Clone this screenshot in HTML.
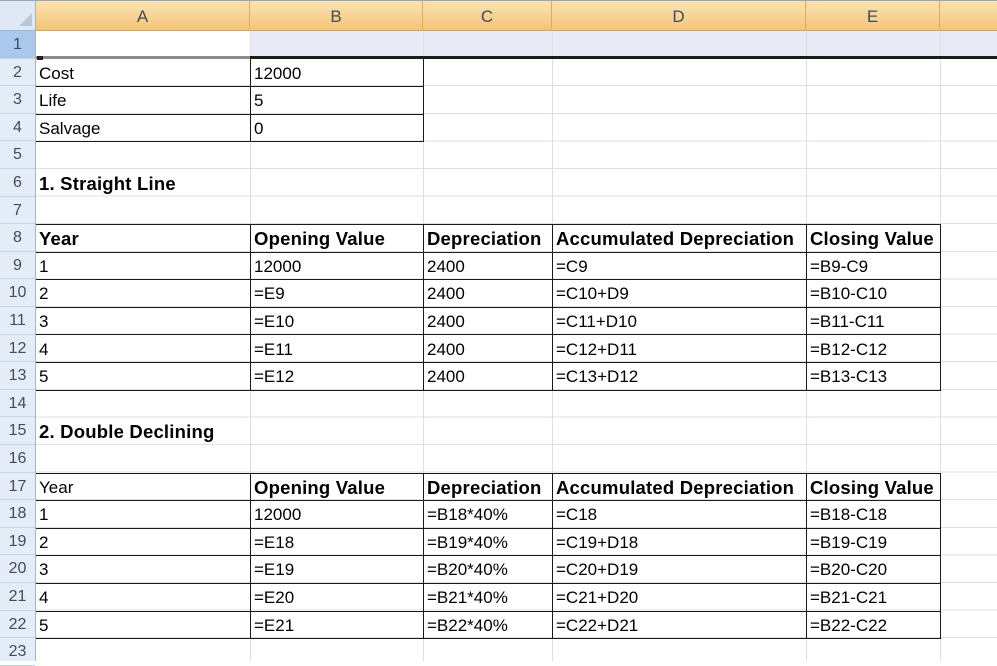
<!DOCTYPE html>
<html><head><meta charset="utf-8">
<style>
*{margin:0;padding:0;box-sizing:border-box}
body{width:997px;height:661px;overflow:hidden;background:#fff;position:relative;font-family:"Liberation Sans",Arial,sans-serif;font-size:17px;color:#000}
.a{position:absolute}
.grid{position:absolute;left:36px;top:31px;right:0;bottom:0;background:repeating-linear-gradient(to bottom,transparent 0,transparent 26.6px,#dadfe8 26.6px,#dadfe8 27.6px)}
.vl{position:absolute;top:31px;bottom:0;width:1px;background:#dadfe8}
.colh{position:absolute;top:0;height:31px;left:36px;right:0;background:linear-gradient(#fbe3b4,#f3c677);border-bottom:1px solid #e3a143;border-top:1px solid #8ea8c6}
.ch{position:absolute;top:0;height:30px;line-height:32px;text-align:center;color:#3f4b5e;font-size:17px;border-right:1px solid #f0a64a}
.rowh{position:absolute;left:0;top:31px;width:36px;bottom:0;background:#e4ecf7;border-right:1px solid #9eb6ce}
.rn{position:absolute;left:0;width:35px;height:27.6px;line-height:28px;text-align:center;color:#3f4b5e;font-size:16px;border-bottom:1px solid #c5d3e6}
.c{position:absolute;height:27.6px;line-height:29px;white-space:nowrap}
.b{font-weight:bold;font-size:18.5px;letter-spacing:0.2px}
.h{position:absolute;height:1px;background:#1a1a1a}
.v{position:absolute;width:1px;background:#1a1a1a}
</style></head><body>
<div class="grid"></div>
<div class="a" style="left:250px;top:31px;right:0;height:27px;background:#e8ebf5"></div>
<div class="vl" style="left:250px"></div><div class="vl" style="left:423px"></div><div class="vl" style="left:552px"></div><div class="vl" style="left:806px"></div><div class="vl" style="left:940px"></div>

<div class="colh">
<div class="ch" style="left:0;width:214px">A</div>
<div class="ch" style="left:214px;width:173px">B</div>
<div class="ch" style="left:387px;width:129px">C</div>
<div class="ch" style="left:516px;width:254px">D</div>
<div class="ch" style="left:770px;width:134px">E</div>
</div>
<div class="a" style="left:0;top:0;width:36px;height:31px;background:#dfe8f4;border-right:1px solid #9eb6ce;border-bottom:1px solid #9eb6ce;border-top:1px solid #8ea8c6"></div>
<svg class="a" style="left:18px;top:12px" width="15" height="15"><polygon points="14,1 14,14 1,14" fill="#b7c6da"/></svg>

<div class="rowh">
<div class="rn" style="top:0;background:#aac8ec">1</div>
<div class="rn" style="top:27.6px">2</div><div class="rn" style="top:55.2px">3</div><div class="rn" style="top:82.8px">4</div><div class="rn" style="top:110.4px">5</div><div class="rn" style="top:138px">6</div><div class="rn" style="top:165.6px">7</div><div class="rn" style="top:193.2px">8</div><div class="rn" style="top:220.8px">9</div><div class="rn" style="top:248.4px">10</div><div class="rn" style="top:276px">11</div><div class="rn" style="top:303.6px">12</div><div class="rn" style="top:331.2px">13</div><div class="rn" style="top:358.8px">14</div><div class="rn" style="top:386.4px">15</div><div class="rn" style="top:414px">16</div><div class="rn" style="top:441.6px">17</div><div class="rn" style="top:469.2px">18</div><div class="rn" style="top:496.8px">19</div><div class="rn" style="top:524.4px">20</div><div class="rn" style="top:552px">21</div><div class="rn" style="top:579.6px">22</div><div class="rn" style="top:607.2px">23</div>
</div>

<div class="a" style="left:36px;top:56px;width:214px;height:3px;background:#8a8a8a"></div>
<div class="a" style="left:250px;top:56px;right:0;height:3px;background:#1c1c14"></div>
<div class="a" style="left:37px;top:56px;width:6px;height:4px;background:#222"></div>

<div class="h" style="left:36px;top:86px;width:388px"></div>
<div class="h" style="left:36px;top:113.5px;width:388px"></div>
<div class="h" style="left:36px;top:141px;width:388px"></div>
<div class="v" style="left:250px;top:58px;height:84px"></div>
<div class="v" style="left:423px;top:58px;height:84px"></div>

<div class="h" style="left:36px;top:224px;width:905px"></div>
<div class="h" style="left:36px;top:251.5px;width:905px"></div>
<div class="h" style="left:36px;top:279px;width:905px"></div>
<div class="h" style="left:36px;top:306.5px;width:905px"></div>
<div class="h" style="left:36px;top:334px;width:905px"></div>
<div class="h" style="left:36px;top:362px;width:905px"></div>
<div class="h" style="left:36px;top:389.5px;width:905px"></div>
<div class="v" style="left:250px;top:224px;height:166px"></div>
<div class="v" style="left:423px;top:224px;height:166px"></div>
<div class="v" style="left:552px;top:224px;height:166px"></div>
<div class="v" style="left:806px;top:224px;height:166px"></div>
<div class="v" style="left:940px;top:224px;height:166px"></div>

<div class="h" style="left:36px;top:472.5px;width:905px"></div>
<div class="h" style="left:36px;top:500px;width:905px"></div>
<div class="h" style="left:36px;top:527.5px;width:905px"></div>
<div class="h" style="left:36px;top:555px;width:905px"></div>
<div class="h" style="left:36px;top:583px;width:905px"></div>
<div class="h" style="left:36px;top:610.5px;width:905px"></div>
<div class="h" style="left:36px;top:638px;width:905px"></div>
<div class="v" style="left:250px;top:472.5px;height:166px"></div>
<div class="v" style="left:423px;top:472.5px;height:166px"></div>
<div class="v" style="left:552px;top:472.5px;height:166px"></div>
<div class="v" style="left:806px;top:472.5px;height:166px"></div>
<div class="v" style="left:940px;top:472.5px;height:166px"></div>

<div class="c" style="left:39px;top:58.6px">Cost</div><div class="c" style="left:254px;top:58.6px">12000</div>
<div class="c" style="left:39px;top:86.2px">Life</div><div class="c" style="left:254px;top:86.2px">5</div>
<div class="c" style="left:39px;top:113.8px">Salvage</div><div class="c" style="left:254px;top:113.8px">0</div>
<div class="c b" style="left:39px;top:169px">1. Straight Line</div>

<div class="c b" style="left:39px;top:224.2px">Year</div><div class="c b" style="left:254px;top:224.2px">Opening Value</div><div class="c b" style="left:427px;top:224.2px">Depreciation</div><div class="c b" style="left:556px;top:224.2px">Accumulated Depreciation</div><div class="c b" style="left:810px;top:224.2px">Closing Value</div>
<div class="c" style="left:39px;top:251.8px">1</div><div class="c" style="left:254px;top:251.8px">12000</div><div class="c" style="left:427px;top:251.8px">2400</div><div class="c" style="left:556px;top:251.8px">=C9</div><div class="c" style="left:810px;top:251.8px">=B9-C9</div>
<div class="c" style="left:39px;top:279.4px">2</div><div class="c" style="left:254px;top:279.4px">=E9</div><div class="c" style="left:427px;top:279.4px">2400</div><div class="c" style="left:556px;top:279.4px">=C10+D9</div><div class="c" style="left:810px;top:279.4px">=B10-C10</div>
<div class="c" style="left:39px;top:307px">3</div><div class="c" style="left:254px;top:307px">=E10</div><div class="c" style="left:427px;top:307px">2400</div><div class="c" style="left:556px;top:307px">=C11+D10</div><div class="c" style="left:810px;top:307px">=B11-C11</div>
<div class="c" style="left:39px;top:334.6px">4</div><div class="c" style="left:254px;top:334.6px">=E11</div><div class="c" style="left:427px;top:334.6px">2400</div><div class="c" style="left:556px;top:334.6px">=C12+D11</div><div class="c" style="left:810px;top:334.6px">=B12-C12</div>
<div class="c" style="left:39px;top:362.2px">5</div><div class="c" style="left:254px;top:362.2px">=E12</div><div class="c" style="left:427px;top:362.2px">2400</div><div class="c" style="left:556px;top:362.2px">=C13+D12</div><div class="c" style="left:810px;top:362.2px">=B13-C13</div>

<div class="c b" style="left:39px;top:417.4px">2. Double Declining</div>

<div class="c" style="left:39px;top:472.6px">Year</div><div class="c b" style="left:254px;top:472.6px">Opening Value</div><div class="c b" style="left:427px;top:472.6px">Depreciation</div><div class="c b" style="left:556px;top:472.6px">Accumulated Depreciation</div><div class="c b" style="left:810px;top:472.6px">Closing Value</div>
<div class="c" style="left:39px;top:500.2px">1</div><div class="c" style="left:254px;top:500.2px">12000</div><div class="c" style="left:427px;top:500.2px">=B18*40%</div><div class="c" style="left:556px;top:500.2px">=C18</div><div class="c" style="left:810px;top:500.2px">=B18-C18</div>
<div class="c" style="left:39px;top:527.8px">2</div><div class="c" style="left:254px;top:527.8px">=E18</div><div class="c" style="left:427px;top:527.8px">=B19*40%</div><div class="c" style="left:556px;top:527.8px">=C19+D18</div><div class="c" style="left:810px;top:527.8px">=B19-C19</div>
<div class="c" style="left:39px;top:555.4px">3</div><div class="c" style="left:254px;top:555.4px">=E19</div><div class="c" style="left:427px;top:555.4px">=B20*40%</div><div class="c" style="left:556px;top:555.4px">=C20+D19</div><div class="c" style="left:810px;top:555.4px">=B20-C20</div>
<div class="c" style="left:39px;top:583px">4</div><div class="c" style="left:254px;top:583px">=E20</div><div class="c" style="left:427px;top:583px">=B21*40%</div><div class="c" style="left:556px;top:583px">=C21+D20</div><div class="c" style="left:810px;top:583px">=B21-C21</div>
<div class="c" style="left:39px;top:610.6px">5</div><div class="c" style="left:254px;top:610.6px">=E21</div><div class="c" style="left:427px;top:610.6px">=B22*40%</div><div class="c" style="left:556px;top:610.6px">=C22+D21</div><div class="c" style="left:810px;top:610.6px">=B22-C22</div>
</body></html>
